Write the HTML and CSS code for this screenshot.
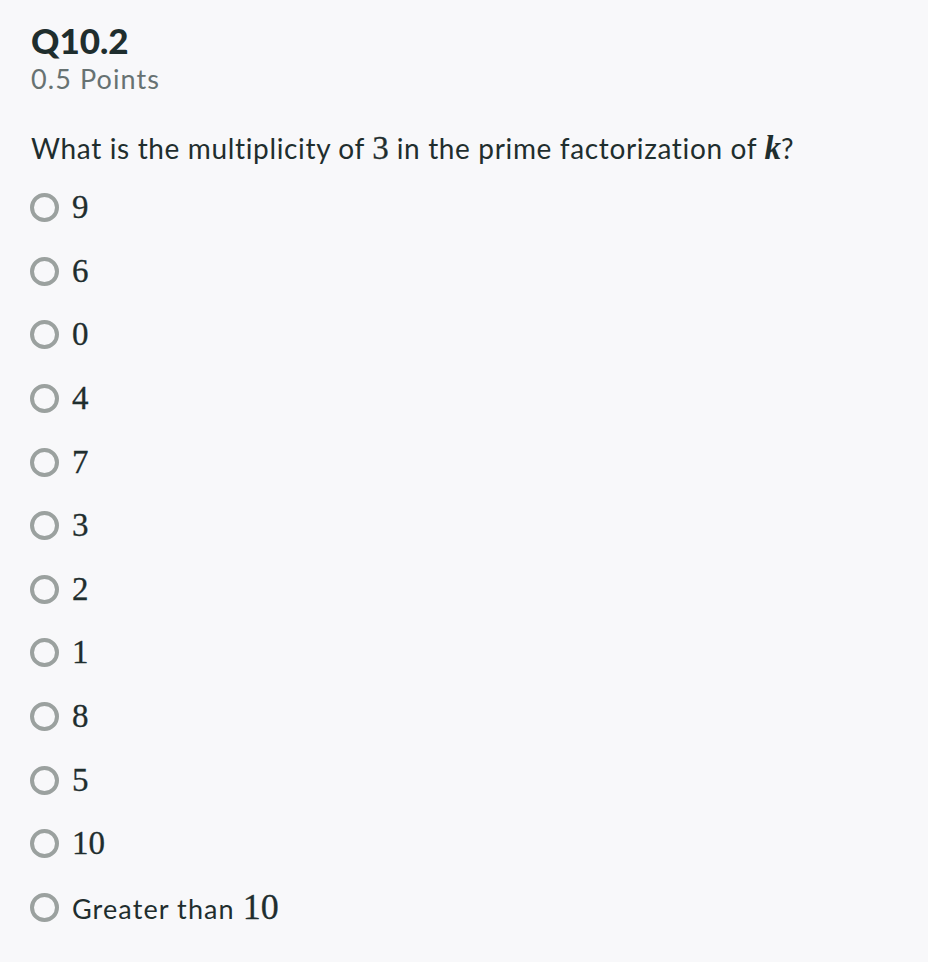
FILE: index.html
```html
<!DOCTYPE html>
<html>
<head>
<meta charset="utf-8">
<link rel="stylesheet" href="styles.css">
</head>
<body>
<div class="question">
  <div class="q-title">Q10.2</div>
  <div class="q-points">0.5 Points</div>
  <p class="q-text">What is the multiplicity of <span class="math">3</span> in the prime factorization of <span class="math italic">k</span>?</p>
  <ul class="options">
    <li class="option"><span class="radio"></span><span class="math">9</span></li>
    <li class="option"><span class="radio"></span><span class="math">6</span></li>
    <li class="option"><span class="radio"></span><span class="math">0</span></li>
    <li class="option"><span class="radio"></span><span class="math">4</span></li>
    <li class="option"><span class="radio"></span><span class="math">7</span></li>
    <li class="option"><span class="radio"></span><span class="math">3</span></li>
    <li class="option"><span class="radio"></span><span class="math">2</span></li>
    <li class="option"><span class="radio"></span><span class="math">1</span></li>
    <li class="option"><span class="radio"></span><span class="math">8</span></li>
    <li class="option"><span class="radio"></span><span class="math">5</span></li>
    <li class="option"><span class="radio"></span><span class="math">10</span></li>
    <li class="option"><span class="radio"></span><span class="label">Greater than <span class="math">10</span></span></li>
  </ul>
</div>
</body>
</html>
```
FILE: styles.css
```css
html, body {
  margin: 0;
  padding: 0;
  background: #f8f8fa;
}
body {
  font-family: Lato, "Open Sans", sans-serif;
  color: #1f2e2e;
}
.question {
  padding: 18px 31px 0 30px;
}
.q-title {
  font-size: 35px;
  font-weight: 900;
  line-height: 44px;
  letter-spacing: 0;
  padding-left: 1px;
}
.q-points {
  font-size: 27px;
  color: #677272;
  line-height: 34px;
  letter-spacing: 1.1px;
  padding-left: 1px;
}
.q-text {
  margin: 32px 0 0 1px;
  font-size: 28px;
  line-height: 40px;
  letter-spacing: 0.65px;
}
.math {
  font-family: "Liberation Serif", "DejaVu Serif", serif;
  font-size: 33px;
  letter-spacing: 0;
  -webkit-text-stroke: 0.3px #1f2e2e;
}
.italic {
  font-style: italic;
  font-weight: 700;
  -webkit-text-stroke: 0;
}
.options {
  list-style: none;
  margin: 8px 0 0 0;
  padding: 0;
  display: flex;
  flex-direction: column;
}
.option {
  display: flex;
  align-items: center;
  height: 63.6px;
  gap: 13px;
}
.radio {
  width: 21px;
  height: 21px;
  border: 4px solid #9ba19f;
  border-radius: 50%;
  flex: none;
}
.label {
  font-size: 27px;
  letter-spacing: 1.1px;
}
.label .math {
  font-size: 36px;
}
```
